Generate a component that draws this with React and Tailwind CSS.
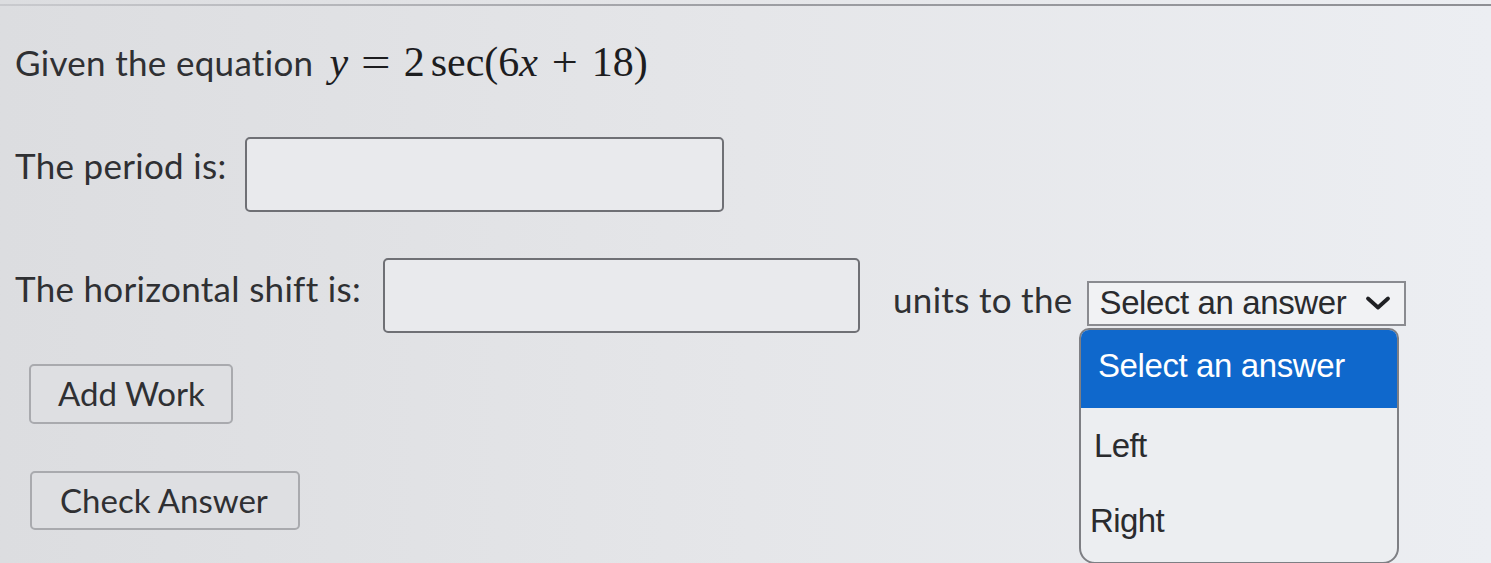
import React from "react";

const labelFont = { fontFamily: "Lato, 'Open Sans', sans-serif" };

const Label = ({ children, className = "" }) => (
  <span className={`text-[35px] tracking-[0.3px] text-[#2f3033] whitespace-nowrap ${className}`} style={labelFont}>
    {children}
  </span>
);

const AnswerBox = ({ className = "" }) => (
  <div className={`h-[75px] rounded-[5px] border-2 border-[#6f7075] bg-[#e9eaed] ${className}`} />
);

const Button = ({ children, className = "" }) => (
  <button className={`flex items-center rounded-[5px] border-2 border-[#a9aaae] bg-[#dedfe2] text-left ${className}`}>
    <span className="text-[33px] text-[#2f3033] whitespace-nowrap" style={labelFont}>{children}</span>
  </button>
);

const Equation = () => (
  <span className="ml-[16px] flex items-baseline text-[42px] text-[#1d1d1f]" style={{ fontFamily: "'Liberation Serif', 'DejaVu Serif', serif" }}>
    <i>y</i>
    <span className="mx-[16px] scale-x-125">=</span>
    <span>2</span>
    <span className="ml-[6px]">sec(6</span>
    <i>x</i>
    <span className="mx-[15px] scale-x-110">+</span>
    <span>18)</span>
  </span>
);

export default function App() {
  return (
    <div className="relative h-[563px] w-full overflow-hidden bg-gradient-to-r from-[#dcdde0] via-[#e5e6e9] to-[#eceef2]">
      <div className="mt-[4px] h-[2px] bg-gradient-to-r from-[#c9cace] via-[#9d9ea3] to-[#8e8f94]" />

      {/* question */}
      <div className="mt-[26px] flex h-[60px] items-center pl-[15px]">
        <Label>Given the equation</Label>
        <Equation />
      </div>

      {/* period */}
      <div className="mt-[45px] flex items-center pl-[15px]">
        <Label className="mb-[18px]">The period is:</Label>
        <AnswerBox className="ml-[18px] w-[479px]" />
      </div>

      {/* horizontal shift */}
      <div className="mt-[46px] flex items-center pl-[15px]">
        <Label className="mb-[15px]">The horizontal shift is:</Label>
        <AnswerBox className="ml-[22px] w-[477px]" />
        <Label className="ml-[33px] mt-[7px]">units to the</Label>
        <div
          className="ml-[14px] mt-[15px] flex h-[45px] w-[319px] items-center justify-between border-2 border-[#8a8b90] bg-[#f1f2f4] pl-[11px] pr-[13px] text-[33px] text-[#2a2b2e]"
          style={{ fontFamily: "'Liberation Sans', Arial, sans-serif" }}
        >
          <span className="tracking-[-0.4px]">Select an answer</span>
          <svg width="26" height="16" viewBox="0 0 26 16" fill="none">
            <path d="M3 3.5l10 9 10-9" stroke="#1f2023" strokeWidth="3.8" strokeLinecap="round" strokeLinejoin="round" />
          </svg>
        </div>
      </div>

      {/* buttons */}
      <Button className="ml-[29px] mt-[31px] h-[60px] w-[204px] pl-[27px]">Add Work</Button>
      <Button className="ml-[30px] mt-[47px] h-[59px] w-[270px] pl-[28px]">Check Answer</Button>

      {/* open select menu */}
      <div
        className="absolute left-[1079px] top-[328px] w-[320px] overflow-hidden rounded-t-[10px] rounded-b-[16px] border-2 border-[#7e7f84] bg-[#eceef1] text-[33px] text-[#2a2b2e]"
        style={{ fontFamily: "'Liberation Sans', Arial, sans-serif" }}
      >
        <div className="flex h-[78px] items-center bg-[#0f68cc] pb-[6px] pl-[17px] text-white tracking-[-0.4px]">Select an answer</div>
        <div className="flex h-[76px] items-center pl-[13px] tracking-[-0.6px]">Left</div>
        <div className="flex h-[78px] items-center pb-[4px] pl-[9px] tracking-[-0.6px]">Right</div>
      </div>
    </div>
  );
}
